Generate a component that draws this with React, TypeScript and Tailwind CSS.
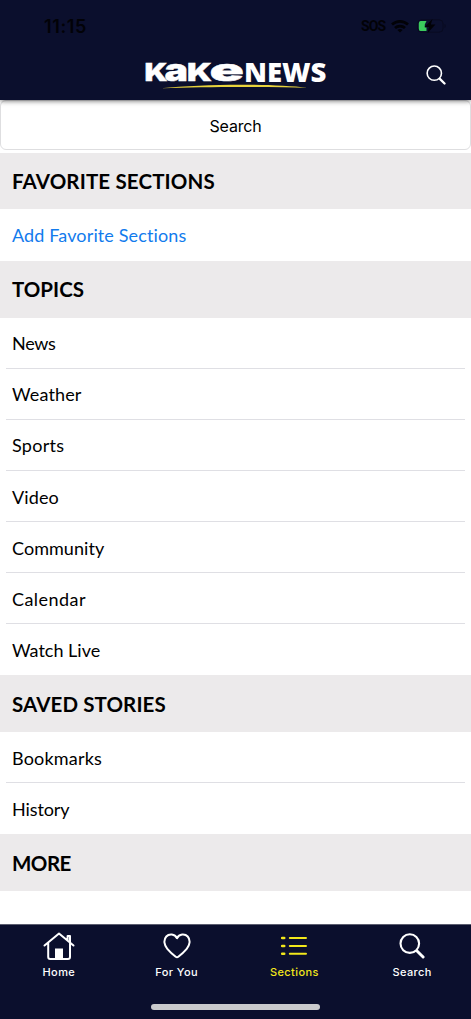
import type { ReactNode } from "react";

type Item = { label: string; tracking: string };

const topics: Item[] = [
  { label: "News", tracking: "tracking-[-0.3px]" },
  { label: "Weather", tracking: "tracking-[0.15px]" },
  { label: "Sports", tracking: "tracking-[0.3px]" },
  { label: "Video", tracking: "tracking-[0.1px]" },
  { label: "Community", tracking: "tracking-[0.05px]" },
  { label: "Calendar", tracking: "tracking-[0.45px]" },
  { label: "Watch Live", tracking: "tracking-[0px]" },
];

const saved: Item[] = [
  { label: "Bookmarks", tracking: "tracking-[0.2px]" },
  { label: "History", tracking: "tracking-[-0.1px]" },
];

function SectionHeading({ children, tracking = "" }: { children: ReactNode; tracking?: string }) {
  return (
    <h2 className={`flex h-[56.8px] items-center bg-[#eceaeb] pl-3 pt-[0.4px] text-[20.5px] font-bold text-black ${tracking}`}>
      {children}
    </h2>
  );
}

function Rows({ items }: { items: Item[] }) {
  return (
    <ul className="px-1.5">
      {items.map(({ label, tracking }, i) => (
        <li
          key={label}
          className={`flex h-[51.1px] items-center pl-1.5 pt-[1.8px] text-[18px] text-black ${tracking} ${
            i < items.length - 1 ? "border-b border-[#dfdfe4]" : ""
          }`}
        >
          {label}
        </li>
      ))}
    </ul>
  );
}

function SearchIcon({ className, weight }: { className: string; weight: number }) {
  return (
    <svg viewBox="0 0 26 26" className={className} fill="none" stroke="currentColor" strokeLinecap="round">
      <circle cx="10.8" cy="10.6" r="9.3" strokeWidth={weight} />
      <path d="M18 18L24.1 24" strokeWidth={weight * 1.4} />
    </svg>
  );
}

function Logo() {
  return (
    <svg viewBox="140 40 192 60" className="-mt-3 h-[60px] w-[192px]" fill="white">
      <g fontFamily="Inter" fontWeight="900" stroke="white" strokeWidth="0.4">
        <text x="144.5" y="81.3" fontSize="25" textLength="23" lengthAdjust="spacingAndGlyphs">K</text>
        <text x="164.5" y="81.3" fontSize="31.5" textLength="23.5" lengthAdjust="spacingAndGlyphs">a</text>
        <text x="187" y="81.3" fontSize="25" textLength="25" lengthAdjust="spacingAndGlyphs">K</text>
        <text x="209.5" y="81.3" fontSize="31.5" textLength="34.5" lengthAdjust="spacingAndGlyphs">e</text>
      </g>
      <text x="244" y="82" fontFamily="Open Sans" fontWeight="800" fontSize="26.5" textLength="82.5" lengthAdjust="spacingAndGlyphs">
        NEWS
      </text>
      <path d="M161 88.2C204 83.9 269 83.3 308 87.8C267 86.6 208 86.6 161 88.2Z" fill="#e8d33c" />
    </svg>
  );
}

function StatusIcons() {
  return (
    <div className="flex items-center text-[#020207]">
      <span className="w-[24px] font-[Roboto,sans-serif] text-[14px] font-bold leading-none tracking-[-0.9px]">SOS</span>
      <svg viewBox="0 0 18 13" className="ml-[6px] h-[13px] w-[18px]" fill="none" stroke="currentColor" strokeWidth="2.7">
        <path d="M1 4.6C5.6.4 12.4.4 17 4.6M4 8C6.8 5.4 11.2 5.4 14 8" />
        <path d="M6.4 10Q9 8 11.6 10L9 12.6Z" fill="currentColor" stroke="none" />
      </svg>
      <svg viewBox="0 0 29 14" className="ml-2 h-[14px] w-[29px]">
        <rect x="0.6" y="0.8" width="25.5" height="12.4" rx="4" fill="none" stroke="#090b20" strokeWidth="1" />
        <path d="M3.5 2H9.5L7.8 5.5V8.5H9.5V12H3.5Q1.8 12 1.8 9.5V4.5Q1.8 2 3.5 2Z" fill="#3bcb5d" />
        <path d="M15.5 0L7.6 8H12L10.6 14L18.4 5.6H13.8Z" fill="currentColor" />
        <path d="M27.5 5V9Q28.8 8.5 28.8 7T27.5 5Z" fill="#090b20" />
      </svg>
    </div>
  );
}

function HomeIcon() {
  return (
    <svg viewBox="0 0 32 28" className="h-7 w-8" fill="none" stroke="currentColor" strokeWidth="2" strokeLinecap="round" strokeLinejoin="round">
      <path d="M1.5 13.5L16 1.5L30.5 13.5M5.2 11V25Q5.2 27 7.2 27H25Q27 27 27 25V11M24.6 8V4H27V10" />
      <path d="M12 16.5H20V27H12Z" fill="currentColor" stroke="none" />
    </svg>
  );
}

function HeartIcon() {
  return (
    <svg viewBox="0 0 28 26" className="h-[26px] w-7" fill="none" stroke="currentColor" strokeWidth="2" strokeLinejoin="round">
      <path d="M14 5.2C11.8.6 6 .5 3.3 3.5C.2 7 1.2 12.2 4.3 15.8C6.8 18.7 10.4 22 12.7 23.8Q14 24.8 15.3 23.8C17.6 22 21.2 18.7 23.7 15.8C26.8 12.2 27.8 7 24.7 3.5C22 .5 16.2.6 14 5.2Z" />
    </svg>
  );
}

function ListIcon() {
  return (
    <svg viewBox="0 0 28 20" className="h-5 w-7" fill="none" stroke="currentColor" strokeLinecap="round">
      <path d="M2.2 2H4.2M2.2 10H4.2M2.2 17.8H4.2" strokeWidth="2.6" />
      <path d="M9.8 2H26M9.8 10H26M9.8 17.8H26" strokeWidth="2" />
    </svg>
  );
}

function Tab({ label, icon, active = false }: { label: string; icon: ReactNode; active?: boolean }) {
  return (
    <button className={`flex flex-col items-center ${active ? "text-[#f2e71b]" : "text-white"}`}>
      <span className="flex h-[40px] items-center pt-px">{icon}</span>
      <span className="text-[11px] font-medium leading-[14px] tracking-[0.4px]">{label}</span>
    </button>
  );
}

export default function App() {
  return (
    <div className="flex h-[1019px] w-[471px] flex-col overflow-hidden bg-white font-[Lato,sans-serif]">
      <header className="z-10 h-[100px] shrink-0 bg-[#0b0f2d] shadow-[0_1px_5px_rgba(0,0,0,0.55)]">
        <div className="flex h-[52px] items-center justify-between pl-[44px] pr-[25px]">
          <span className="font-[Inter,sans-serif] text-[18px] font-semibold tracking-[0.6px] text-[#020207]">11:15</span>
          <StatusIcons />
        </div>
        <div className="grid h-12 grid-cols-[1fr_192px_1fr] items-center">
          <span />
          <Logo />
          <div className="flex justify-end pb-0.5 pr-[25px] text-white">
            <SearchIcon className="h-5 w-5" weight={2.1} />
          </div>
        </div>
      </header>

      <div className="h-[52.7px] shrink-0">
        <button className="flex h-[49.5px] w-full items-center justify-center rounded-[6px] border border-[#dedee0] pt-[3px] font-[Inter,sans-serif] text-[16px] tracking-[-0.2px] text-black">
          Search
        </button>
      </div>

      <main className="grow">
        <SectionHeading tracking="tracking-[0.15px]">FAVORITE SECTIONS</SectionHeading>
        <a className="flex h-[51.5px] items-center pl-3 text-[18px] tracking-[0.13px] text-[#127bed]">Add Favorite Sections</a>
        <SectionHeading>TOPICS</SectionHeading>
        <Rows items={topics} />
        <SectionHeading tracking="tracking-[0.1px]">SAVED STORIES</SectionHeading>
        <Rows items={saved} />
        <SectionHeading tracking="tracking-[-0.5px]">MORE</SectionHeading>
      </main>

      <nav className="h-[95px] shrink-0 border-t border-[#5c5e70] bg-[#0b0f2d] font-[Inter,sans-serif]">
        <div className="grid h-[79px] grid-cols-4 items-start">
          <Tab label="Home" icon={<HomeIcon />} />
          <Tab label="For You" icon={<HeartIcon />} />
          <Tab label="Sections" icon={<ListIcon />} active />
          <Tab label="Search" icon={<SearchIcon className="h-[26px] w-[26px]" weight={2.1} />} />
        </div>
        <div className="mx-auto h-[5.5px] w-[169px] rounded-full bg-[#cacacd]" />
      </nav>
    </div>
  );
}
